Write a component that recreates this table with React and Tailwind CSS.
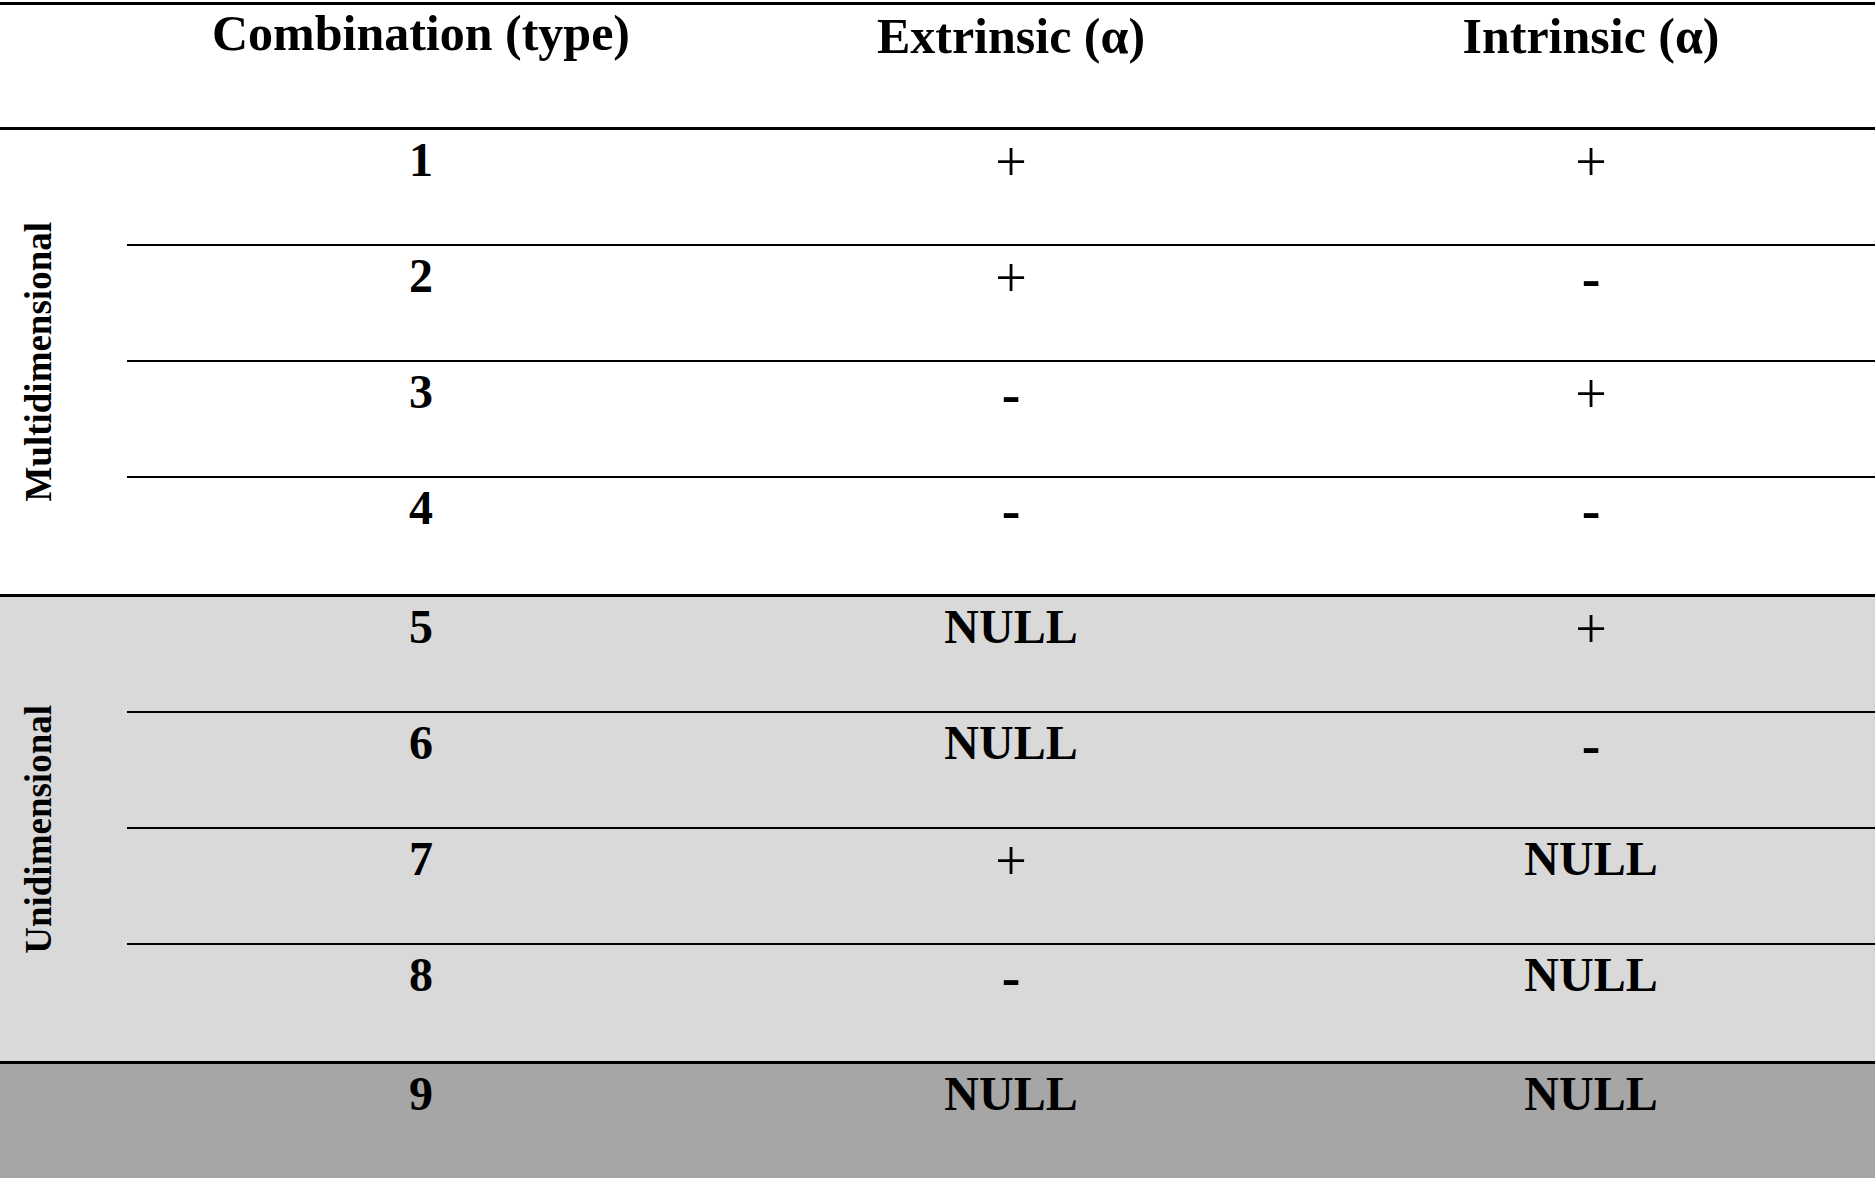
import React from "react";

const multi = [
  ["1", "+", "+"],
  ["2", "+", "-"],
  ["3", "-", "+"],
  ["4", "-", "-"],
];

const uni = [
  ["5", "NULL", "+"],
  ["6", "NULL", "-"],
  ["7", "+", "NULL"],
  ["8", "-", "NULL"],
];

const Cell = ({ value }) => (
  <div className="flex justify-center pt-[6px]">
    {value === "+" ? (
      <span className="font-normal text-[56px] leading-none -mt-[2px]">+</span>
    ) : value === "-" ? (
      <span className="font-bold text-[56px] leading-none -mt-[2px]">-</span>
    ) : (
      <span className="font-bold">{value}</span>
    )}
  </div>
);

const Row = ({ row, last }) => (
  <div
    className={`grid grid-cols-[588px_592px_1fr] h-[116px] ${
      last ? "" : "border-b-2 border-black"
    }`}
  >
    {row.map((v, i) => (
      <Cell key={i} value={v} />
    ))}
  </div>
);

const Group = ({ label, rows, bg }) => (
  <div className={`flex border-b-[3px] border-black ${bg}`}>
    <div className="w-[127px] shrink-0 flex items-center pl-[20px]">
      <span className="[writing-mode:vertical-rl] rotate-180 text-[37px] leading-none font-bold">
        {label}
      </span>
    </div>
    <div className="flex-1 flex flex-col">
      {rows.map((r, i) => (
        <Row key={i} row={r} last={i === rows.length - 1} />
      ))}
    </div>
  </div>
);

export default function App() {
  return (
    <div
      className="h-[1178px] w-[1875px] overflow-hidden bg-white text-black flex flex-col pt-[2px] text-[48px] leading-none"
      style={{ fontFamily: '"Liberation Serif", "Times New Roman", serif' }}
    >
      <div className="flex border-t-[3px] border-b-[3px] border-black h-[128px] shrink-0 text-[50px] font-bold">
        <div className="w-[127px] shrink-0" />
        <div className="flex-1 grid grid-cols-[588px_592px_1fr]">
          <div className="flex justify-center pt-[3px]">Combination (type)</div>
          <div className="flex justify-center pt-[6px]">Extrinsic (α)</div>
          <div className="flex justify-center pt-[6px]">Intrinsic (α)</div>
        </div>
      </div>

      <Group label="Multidimensional" rows={multi} bg="bg-white" />
      <Group label="Unidimensional" rows={uni} bg="bg-[#d9d9d9]" />

      <div className="flex-1 flex bg-[#a6a6a6]">
        <div className="w-[127px] shrink-0" />
        <div className="flex-1">
          <Row row={["9", "NULL", "NULL"]} last />
        </div>
      </div>
    </div>
  );
}
